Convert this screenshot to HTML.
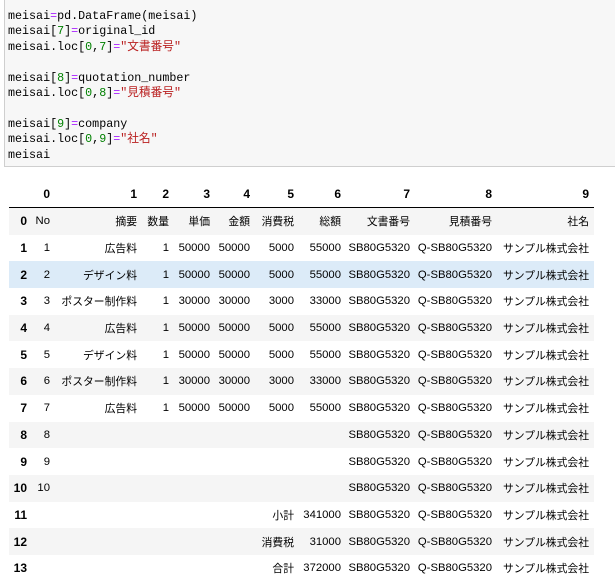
<!DOCTYPE html>
<html><head><meta charset="utf-8"><style>
body{margin:0;background:#fff;width:615px;height:585px;overflow:hidden;position:relative}
.code{position:absolute;left:4px;top:0;width:611px;height:167px;background:#f7f7f7;border:1px solid #cfcfcf;border-top:none;border-right:none;box-sizing:border-box}
pre{margin:0;position:absolute;left:3px;top:9px;font-family:"Liberation Mono","Noto Sans CJK JP",monospace;font-size:11.7px;line-height:15.4px;color:#000}
.o{color:#aa22ff}.n{color:#008000}.s{color:#ba2121}
table{position:absolute;left:9px;top:181px;width:585px;border-collapse:collapse;table-layout:fixed;font-family:"Liberation Sans","Noto Sans CJK JP",sans-serif;font-size:12px;color:#000}
td,th{text-align:right;padding:0 5px 0 0;height:26.7px;white-space:nowrap;overflow:visible}
td{font-size:11.3px}
.j{font-size:10.8px}
th{font-weight:bold}
thead th{height:26px;border-bottom:1px solid #000}
tbody tr:nth-child(odd){background:#f5f5f5}
tbody tr.h{background:#dcebf8}
</style></head><body>
<div class="code"><pre>meisai<span class="o">=</span>pd.DataFrame(meisai)
meisai[<span class="n">7</span>]<span class="o">=</span>original_id
meisai.loc[<span class="n">0</span>,<span class="n">7</span>]<span class="o">=</span><span class="s">"文書番号"</span>

meisai[<span class="n">8</span>]<span class="o">=</span>quotation_number
meisai.loc[<span class="n">0</span>,<span class="n">8</span>]<span class="o">=</span><span class="s">"見積番号"</span>

meisai[<span class="n">9</span>]<span class="o">=</span>company
meisai.loc[<span class="n">0</span>,<span class="n">9</span>]<span class="o">=</span><span class="s">"社名"</span>
meisai</pre></div>
<table>
<colgroup><col style="width:23px"><col style="width:23px"><col style="width:87px"><col style="width:32px"><col style="width:41px"><col style="width:40px"><col style="width:44px"><col style="width:47px"><col style="width:69px"><col style="width:82px"><col style="width:97px"></colgroup>
<thead><tr><th></th><th>0</th><th>1</th><th>2</th><th>3</th><th>4</th><th>5</th><th>6</th><th>7</th><th>8</th><th>9</th></tr></thead>
<tbody>
<tr><th>0</th><td>No</td><td class="j">摘要</td><td class="j">数量</td><td class="j">単価</td><td class="j">金額</td><td class="j">消費税</td><td class="j">総額</td><td class="j">文書番号</td><td class="j">見積番号</td><td class="j">社名</td></tr>
<tr><th>1</th><td>1</td><td class="j">広告料</td><td>1</td><td>50000</td><td>50000</td><td>5000</td><td>55000</td><td>SB80G5320</td><td>Q-SB80G5320</td><td class="j">サンプル株式会社</td></tr>
<tr class="h"><th>2</th><td>2</td><td class="j">デザイン料</td><td>1</td><td>50000</td><td>50000</td><td>5000</td><td>55000</td><td>SB80G5320</td><td>Q-SB80G5320</td><td class="j">サンプル株式会社</td></tr>
<tr><th>3</th><td>3</td><td class="j">ポスター制作料</td><td>1</td><td>30000</td><td>30000</td><td>3000</td><td>33000</td><td>SB80G5320</td><td>Q-SB80G5320</td><td class="j">サンプル株式会社</td></tr>
<tr><th>4</th><td>4</td><td class="j">広告料</td><td>1</td><td>50000</td><td>50000</td><td>5000</td><td>55000</td><td>SB80G5320</td><td>Q-SB80G5320</td><td class="j">サンプル株式会社</td></tr>
<tr><th>5</th><td>5</td><td class="j">デザイン料</td><td>1</td><td>50000</td><td>50000</td><td>5000</td><td>55000</td><td>SB80G5320</td><td>Q-SB80G5320</td><td class="j">サンプル株式会社</td></tr>
<tr><th>6</th><td>6</td><td class="j">ポスター制作料</td><td>1</td><td>30000</td><td>30000</td><td>3000</td><td>33000</td><td>SB80G5320</td><td>Q-SB80G5320</td><td class="j">サンプル株式会社</td></tr>
<tr><th>7</th><td>7</td><td class="j">広告料</td><td>1</td><td>50000</td><td>50000</td><td>5000</td><td>55000</td><td>SB80G5320</td><td>Q-SB80G5320</td><td class="j">サンプル株式会社</td></tr>
<tr><th>8</th><td>8</td><td></td><td></td><td></td><td></td><td></td><td></td><td>SB80G5320</td><td>Q-SB80G5320</td><td class="j">サンプル株式会社</td></tr>
<tr><th>9</th><td>9</td><td></td><td></td><td></td><td></td><td></td><td></td><td>SB80G5320</td><td>Q-SB80G5320</td><td class="j">サンプル株式会社</td></tr>
<tr><th>10</th><td>10</td><td></td><td></td><td></td><td></td><td></td><td></td><td>SB80G5320</td><td>Q-SB80G5320</td><td class="j">サンプル株式会社</td></tr>
<tr><th>11</th><td></td><td></td><td></td><td></td><td></td><td class="j">小計</td><td>341000</td><td>SB80G5320</td><td>Q-SB80G5320</td><td class="j">サンプル株式会社</td></tr>
<tr><th>12</th><td></td><td></td><td></td><td></td><td></td><td class="j">消費税</td><td>31000</td><td>SB80G5320</td><td>Q-SB80G5320</td><td class="j">サンプル株式会社</td></tr>
<tr><th>13</th><td></td><td></td><td></td><td></td><td></td><td class="j">合計</td><td>372000</td><td>SB80G5320</td><td>Q-SB80G5320</td><td class="j">サンプル株式会社</td></tr>
</tbody></table>
</body></html>
